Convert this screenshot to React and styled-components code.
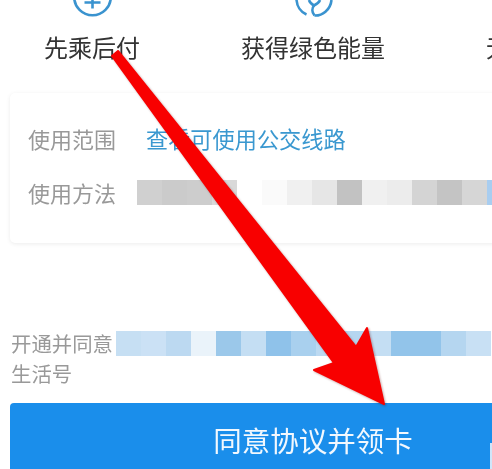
import React from "react";
import styled, { createGlobalStyle } from "styled-components";

const usageTiles = [
	"#d0d0d0", "#cbcbcb", "#cdcdcd", "#d9d9d9", "#ffffff", "#fafafa",
	"#f0f0f0", "#e6e6e6", "#c2c2c2", "#f0f0f0", "#ececec", "#d4d4d4",
	"#c4c4c4", "#d6d6d6", "#a8cdf0",
];

const agreementTiles = [
	"#c6dff3", "#cbe1f5", "#bcd9f1", "#eaf3fa", "#9bc8ea", "#c4def3",
	"#8fc2ea", "#a9d0ee", "#bcd9f1", "#b5d6f0", "#c4def3", "#92c4ea",
	"#92c4ea", "#b5d6f0", "#c8e0f4",
];

const App = () => {
	return (
		<Page>
			<GlobalStyle />

			<Features>
				<Feature>
					<FeatureIcon viewBox='0 0 44 18'>
						<circle cx='22.5' cy='-3' r='18.3' />
						<path d='M14.5 2.5H30.5M22.5 -3V8.5' />
					</FeatureIcon>
					<FeatureLabel>先乘后付</FeatureLabel>
				</Feature>
				<Feature>
					<FeatureIcon viewBox='0 0 44 18'>
						<path d='M5.5 0C6 6 9.5 12 15.5 14.5' />
						<path d='M23.5 15.5C31 16 39.500 10 40.500 0' />
						<path d='M18 0C19 3 21 4.500 23 5.500C25 4.500 28 3 29 0' />
						<path d='M23 5.500C21 8 20.500 12 23.500 15.500' />
					</FeatureIcon>
					<FeatureLabel>获得绿色能量</FeatureLabel>
				</Feature>
				<Feature>
					<FeatureLabel>无需现金</FeatureLabel>
				</Feature>
			</Features>

			<InfoCard>
				<InfoRow>
					<InfoLabel>使用范围</InfoLabel>
					<InfoLink>查看可使用公交线路</InfoLink>
				</InfoRow>
				<InfoRow>
					<InfoLabel>使用方法</InfoLabel>
					<Tiles>
						{usageTiles.map((color, i) => (
							<Tile key={i} color={color} />
						))}
					</Tiles>
				</InfoRow>
			</InfoCard>

			<Agreement>
				<AgreementLine>
					开通并同意
					<Tiles>
						{agreementTiles.map((color, i) => (
							<Tile key={i} color={color} />
						))}
					</Tiles>
				</AgreementLine>
				<AgreementLine>生活号</AgreementLine>
			</Agreement>

			<SubmitButton>
				同意协议并领卡
				<ButtonMark />
			</SubmitButton>

			<Arrow viewBox='0 0 492 469'>
				<polygon points='112,56 118,51 356,347 367,328 384,404 314,370 334,363' />
			</Arrow>
		</Page>
	);
};

const GlobalStyle = createGlobalStyle`
	html,
	body {
		margin: 0;
		background: #fff;
	}
`;

const Page = styled.div`
	position: relative;
	width: 492px;
	height: 469px;
	overflow: hidden;
	background: #fff;
	font-family: "Noto Sans CJK SC", "Noto Sans", sans-serif;
	filter: blur(0.35px);
`;

const Features = styled.div`
	display: flex;
	gap: 101px;
	padding-left: 44px;
	white-space: nowrap;
`;

const Feature = styled.div`
	display: flex;
	flex-direction: column;
	align-items: center;
	justify-content: flex-end;
	flex-shrink: 0;
`;

const FeatureIcon = styled.svg`
	display: block;
	width: 44px;
	height: 18px;
	fill: none;
	stroke: #3a93cf;
	stroke-width: 2.6;
`;

const FeatureLabel = styled.div`
	margin-top: 12px;
	margin-bottom: 2px;
	font-size: 24px;
	line-height: 34px;
	color: #333;
`;

const InfoCard = styled.div`
	box-sizing: border-box;
	width: 520px;
	height: 150px;
	margin: 27px 0 0 10px;
	padding: 18px 18px;
	border-radius: 5px;
	background: #fff;
	box-shadow: 0 1px 4px rgba(0, 0, 0, 0.08);
`;

const InfoRow = styled.div`
	display: flex;
	align-items: center;
	gap: 21px;
	height: 54px;
	white-space: nowrap;
`;

const InfoLabel = styled.div`
	width: 88px;
	font-size: 22px;
	color: #999;
`;

const InfoLink = styled.div`
	padding-left: 9px;
	font-size: 22.2px;
	color: #3a98d0;
`;

const Tiles = styled.div`
	display: flex;
	flex-shrink: 0;
`;

const Tile = styled.div`
	width: 25px;
	height: 25px;
	background: ${(props) => props.color};
`;

const Agreement = styled.div`
	margin: 85px 0 0 11px;
`;

const AgreementLine = styled.div`
	display: flex;
	align-items: center;
	gap: 3px;
	height: 30px;
	font-size: 20.4px;
	color: #999;
	white-space: nowrap;
`;

const SubmitButton = styled.div`
	position: relative;
	width: 606px;
	height: 80px;
	margin: 15px 0 0 10px;
	padding-top: 15px;
	box-sizing: border-box;
	border-radius: 4px 4px 0 0;
	background: #1a8eeb;
	color: #f2f8fe;
	font-size: 28.500px;
	line-height: 44px;
	text-align: center;
`;

const ButtonMark = styled.span`
	position: absolute;
	top: 40px;
	left: 480px;
	width: 2px;
	height: 26px;
	background: #cfe6fa;
`;

const Arrow = styled.svg`
	position: absolute;
	top: 0;
	left: 0;
	width: 492px;
	height: 469px;
	fill: #f80000;
	stroke: #f80000;
	stroke-width: 2;
	stroke-linejoin: round;
	filter: drop-shadow(1px 1px 1px rgba(90, 0, 0, 0.35));
`;

export default App;
